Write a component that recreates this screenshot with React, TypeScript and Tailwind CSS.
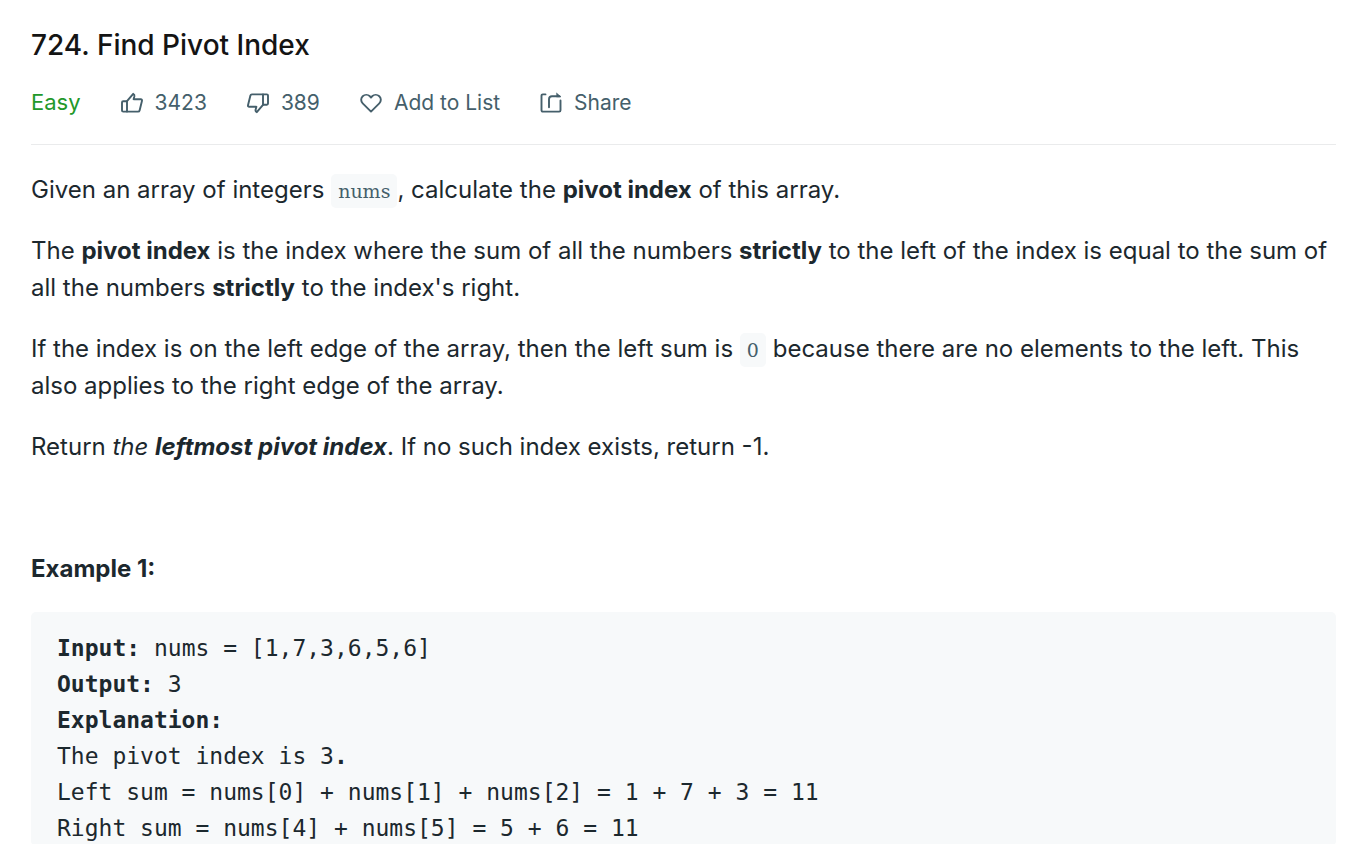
import type { ReactNode } from "react";

function Icon({ children }: { children: ReactNode }) {
  return (
    <svg
      viewBox="0 0 24 24"
      className="size-6 shrink-0"
      fill="none"
      stroke="currentColor"
      strokeWidth="1.9"
      strokeLinejoin="round"
      strokeLinecap="round"
      aria-hidden="true"
    >
      {children}
    </svg>
  );
}

function Action({ icon, label }: { icon: ReactNode; label: string }) {
  return (
    <button type="button" className="flex cursor-pointer items-center gap-[11px]">
      <Icon>{icon}</Icon>
      <span>{label}</span>
    </button>
  );
}

const thumb = (
  <>
    <path d="M7 10.2V20.6H3.2a1.2 1.2 0 0 1-1.2-1.2v-8a1.2 1.2 0 0 1 1.2-1.2z" />
    <path d="M7 10.2 13.2 2.8Q14.8 3.5 14.4 5.2L13.6 8.2H20.8a1.2 1.2 0 0 1 1.2 1.5l-2.4 9.7a1.6 1.6 0 0 1-1.6 1.2H7" />
  </>
);

const thumbDown = <g transform="rotate(180 12 12)">{thumb}</g>;

const heart = (
  <path d="M12 20.6 3.7 12.4a4.9 4.9 0 0 1 0-7.1 5.2 5.2 0 0 1 7.2 0L12 6.5l1.1-1.2a5.2 5.2 0 0 1 7.2 0 4.9 4.9 0 0 1 0 7.1z" />
);

const share = (
  <>
    <path d="M6.5 3.4H3.8A1.3 1.3 0 0 0 2.5 4.7v14.6a1.3 1.3 0 0 0 1.3 1.3h16.4a1.3 1.3 0 0 0 1.3-1.3V9.5" />
    <path d="M10 16.3V8.2a3 3 0 0 1 3-3h7.5" />
    <path d="M17.8 2.2 22 5.9H17.8z" fill="currentColor" strokeWidth="0.6" />
  </>
);

function InlineCode({ children }: { children: ReactNode }) {
  return (
    <code className="rounded-[5px] bg-[#f7f9fa] px-[7px] py-[6px] font-['DejaVu_Serif',serif] text-[19px] leading-none text-[#455f6b]">
      {children}
    </code>
  );
}

export default function App() {
  return (
    <main className="flex min-h-screen flex-col bg-white pt-[27px] pr-[22px] pl-[31px] font-['Inter',sans-serif] text-2xl leading-[37px] text-[#1c282e]">
      <h1 className="text-[28px] leading-9 font-medium text-[#141414]">724. Find Pivot Index</h1>

      <div className="mt-5 flex h-[62px] items-start border-b border-[#eaebec] text-[21px] leading-[39px] text-[#455f6b]">
        <span className="mr-[39px] text-[22px] text-[#22982a]">Easy</span>
        <div className="flex gap-[39px]">
          <Action label="3423" icon={thumb} />
          <Action label="389" icon={thumbDown} />
          <Action label="Add to List" icon={heart} />
          <Action label="Share" icon={share} />
        </div>
      </div>

      <div className="mt-[26px] flex flex-col gap-6">
        <p>
          Given an array of integers <InlineCode>nums</InlineCode>, calculate the <strong>pivot index</strong> of this array.
        </p>
        <p>
          The <strong>pivot index</strong> is the index where the sum of all the numbers <strong>strictly</strong> to the
          left of the index is equal to the sum of all the numbers <strong>strictly</strong> to the index's right.
        </p>
        <p>
          If the index is on the left edge of the array, then the left sum is <InlineCode>0</InlineCode> because there are
          no elements to the left. This also applies to the right edge of the array.
        </p>
        <p>
          Return <em>the <strong>leftmost pivot index</strong></em>. If no such index exists, return -1.
        </p>
        <p>&nbsp;</p>
        <p>
          <strong>Example 1:</strong>
        </p>
      </div>

      <pre className="mt-[25px] grow rounded-[5px] bg-[#f7f9fa] px-[26px] pt-[18px] font-['DejaVu_Sans_Mono',monospace] text-[23px] leading-9">
        <strong>Input:</strong> nums = [1,7,3,6,5,6]{"\n"}
        <strong>Output:</strong> 3{"\n"}
        <strong>Explanation:</strong>{"\n"}
        The pivot index is 3<strong>.</strong>{"\n"}
        Left sum = nums[0] + nums[1] + nums[2] = 1 + 7 + 3 = 11{"\n"}
        Right sum = nums[4] + nums[5] = 5 + 6 = 11
      </pre>
    </main>
  );
}
